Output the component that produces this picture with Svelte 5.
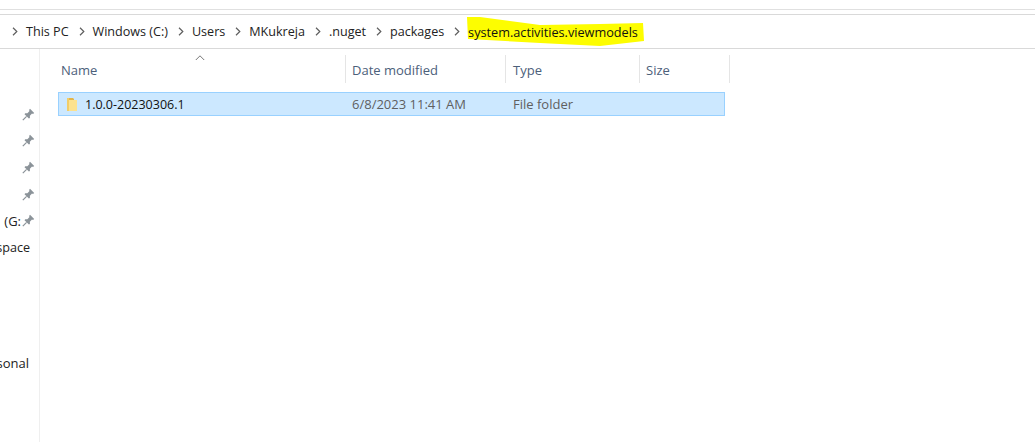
<script lang="ts">
	const crumbs = ['This PC', 'Windows (C:)', 'Users', 'MKukreja', '.nuget', 'packages'];
	const columns = [
		{ label: 'Name', width: 288, pad: 3 },
		{ label: 'Date modified', width: 160, pad: 6 },
		{ label: 'Type', width: 134, pad: 7 },
		{ label: 'Size', width: 90, pad: 6 }
	];
	const pins = [0, 1, 2, 3, 4];
</script>

<div class="window">
	<div class="ribbon">
		<span class="tab share">Share</span>
		<span class="tab view">View</span>
	</div>

	<div class="address">
		{#each crumbs as crumb}
			<svg class="chevron" width="6" height="9" viewBox="0 0 6 9"><path d="M1 .8 4.8 4.5 1 8.2" /></svg>
			<span class="crumb">{crumb}</span>
		{/each}
		<svg class="chevron" width="6" height="9" viewBox="0 0 6 9"><path d="M1 .8 4.8 4.5 1 8.2" /></svg>
		<span class="crumb current">
			<svg class="marker" width="180" height="30" viewBox="0 0 180 30">
				<path d="M2 0 15 0 75 8 135 7 178 6 179 24 135 29 75 26 3 22Z" />
			</svg>
			<span class="current-text">system.activities.viewmodels</span>
		</span>
	</div>

	<div class="body">
		<nav class="sidebar">
			<div class="pins">
				{#each pins as pin}
					<div class="pin-row">
						{#if pin === 4}<span class="drive">(G:</span>{/if}
						<svg class="pin" width="13" height="13" viewBox="0 0 13 13">
							<path d="M8 .8 12.2 5 11 6 10 5.6 7.9 7.7 7.9 10 6.9 10.6 2.5 6.2 3.2 5.2 5.4 5.2 7.5 3.1 7.1 2Z" />
							<path class="needle" d="M4.6 8.4.8 12.2" />
						</svg>
					</div>
				{/each}
			</div>
			<div class="nav-label space"><span>space</span></div>
			<div class="nav-label personal"><span>Personal</span></div>
		</nav>

		<main class="files">
			<div class="header">
				<svg class="sort" width="10" height="6" viewBox="0 0 10 6"><path d="M.8 5 5 .8 9.2 5" /></svg>
				{#each columns as col}
					<div class="col" style="width: {col.width}px; padding-left: {col.pad}px">{col.label}</div>
				{/each}
			</div>
			<div class="row">
				<div class="cell name">
					<svg class="folder" width="12" height="15" viewBox="0 0 12 15">
						<path fill="#e3b54a" d="M1 1h6l1 1v12H1z" />
						<path fill="#fce28f" d="M3 3h8v11H3z" />
						<path fill="#f2cd68" d="M1 1h2v13H1z" />
					</svg>
					<span class="file-name">1.0.0-20230306.1</span>
				</div>
				<div class="cell date">6/8/2023 11:41 AM</div>
				<div class="cell type">File folder</div>
			</div>
		</main>
	</div>
</div>

<style>
	:global(body) {
		margin: 0;
		background: #fff;
	}

	.window {
		width: 1035px;
		height: 442px;
		overflow: hidden;
		display: flex;
		flex-direction: column;
		font-family: 'Open Sans', 'Liberation Sans', sans-serif;
		font-size: 13px;
		color: #1a1a1a;
	}

	.ribbon {
		height: 10px;
		box-sizing: border-box;
		border-bottom: 1px solid #e0e0e0;
		position: relative;
		overflow: hidden;
		flex: none;
	}

	.tab {
		position: absolute;
		top: -12px;
		font-size: 12px;
		line-height: 16px;
		color: #333;
	}

	.share { left: 4px; }
	.view { left: 66px; }

	.address {
		height: 35px;
		margin-top: 4px;
		box-sizing: border-box;
		border-top: 1px solid #d9d9d9;
		border-bottom: 1px solid #d9d9d9;
		flex: none;
		display: flex;
		align-items: center;
		padding-left: 12px;
		font-size: 12.6px;
	}

	.chevron {
		fill: none;
		stroke: #5f5f5f;
		stroke-width: 1.2;
		margin-right: 8px;
		flex: none;
	}

	.crumb {
		margin-right: 9.9px;
		color: #222;
		white-space: nowrap;
	}

	.current {
		position: relative;
		color: #111;
		font-size: 12.7px;
	}

	.marker {
		position: absolute;
		left: -3px;
		top: -6px;
		fill: #fdfd00;
	}

	.current-text {
		position: relative;
	}

	.body {
		flex: 1;
		display: flex;
		min-height: 0;
	}

	.sidebar {
		width: 40px;
		flex: none;
		box-sizing: border-box;
		border-right: 1px solid #efefef;
		padding-top: 52px;
		overflow: hidden;
	}

	.pin-row {
		height: 26.6px;
		display: flex;
		align-items: center;
		justify-content: flex-end;
		padding-right: 4px;
		gap: 1px;
		white-space: nowrap;
	}

	.drive {
		color: #222;
	}

	.pin path {
		fill: #8b9399;
	}

	.pin .needle {
		fill: none;
		stroke: #8b9399;
		stroke-width: 1.2;
	}

	.nav-label {
		display: flex;
		justify-content: flex-end;
		padding-right: 10px;
		white-space: nowrap;
		color: #222;
	}

	.space {
		margin-top: 5px;
		padding-right: 9px;
		font-size: 12.6px;
	}

	.personal {
		margin-top: 98px;
	}

	.files {
		flex: 1;
		padding-left: 18px;
		min-width: 0;
	}

	.header {
		height: 43px;
		display: flex;
		position: relative;
	}

	.sort {
		position: absolute;
		left: 137px;
		top: 6px;
		fill: none;
		stroke: #777;
		stroke-width: 1;
	}

	.col {
		box-sizing: border-box;
		height: 28px;
		margin-top: 6px;
		border-right: 1px solid #e5e5e5;
		padding-top: 6px;
		color: #4c607a;
	}

	.row {
		width: 667px;
		height: 24px;
		box-sizing: border-box;
		background: #cce8ff;
		border: 1px solid #99d1ff;
		display: flex;
		align-items: center;
	}

	.cell {
		box-sizing: border-box;
		white-space: nowrap;
	}

	.name {
		width: 286px;
		display: flex;
		align-items: center;
		padding-left: 7px;
		gap: 7px;
		color: #111;
	}

	.file-name {
		font-size: 12.5px;
	}

	.date {
		width: 161px;
		padding-left: 7px;
		color: #5f5f5f;
	}

	.type {
		padding-left: 7px;
		color: #5f5f5f;
	}
</style>
